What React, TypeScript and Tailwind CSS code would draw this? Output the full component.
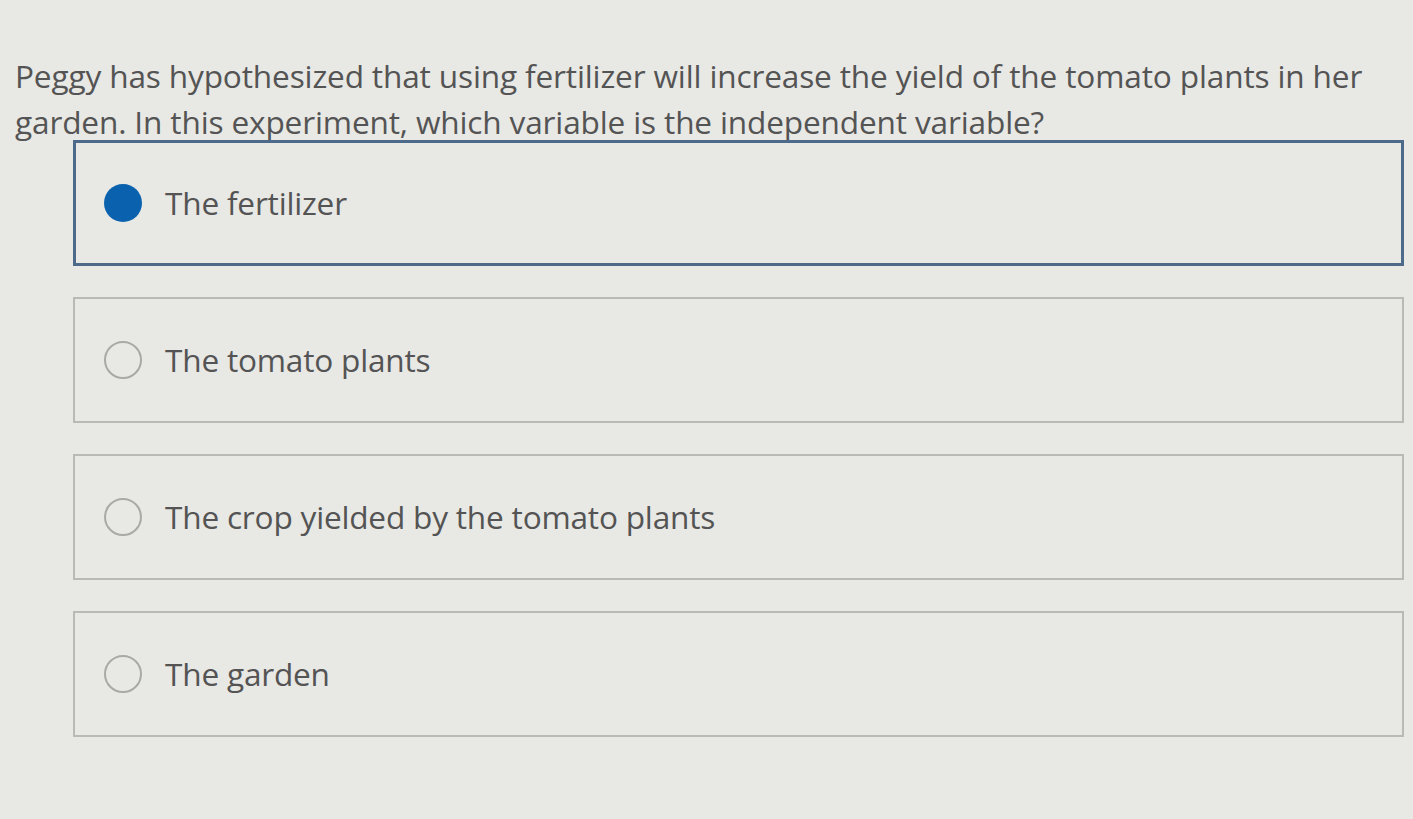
import React from "react";

const options = [
  { label: "The fertilizer", selected: true },
  { label: "The tomato plants", selected: false },
  { label: "The crop yielded by the tomato plants", selected: false },
  { label: "The garden", selected: false },
];

export default function App() {
  return (
    <div
      className="w-[1413px] h-[819px] bg-[#e8e8e5] overflow-hidden pl-[15px] pt-[53px] text-[#545454]"
      style={{ fontFamily: '"Open Sans", sans-serif' }}
    >
      <p className="text-[31.6px] leading-[46px] tracking-[-0.15px] whitespace-nowrap">
        Peggy has hypothesized that using fertilizer will increase the yield of the tomato plants in her
        <br />
        garden. In this experiment, which variable is the independent variable?
      </p>
      <div className="flex flex-col gap-[31px] ml-[58px] mr-[9px] mt-[-5px]">
        {options.map((o) => (
          <div
            key={o.label}
            className={
              o.selected
                ? "h-[126px] border-[3px] border-[#4e6a8b] flex items-center pl-[28px]"
                : "h-[126px] border-2 border-[#b9b9b6] flex items-center pl-[29px]"
            }
          >
            {o.selected ? (
              <span className="w-[38px] h-[38px] rounded-full bg-[#0a62ae] shrink-0" />
            ) : (
              <span className="w-[38px] h-[38px] rounded-full border-2 border-[#a9a9a6] shrink-0" />
            )}
            <span className="ml-[23px] text-[31.6px] leading-none tracking-[-0.2px]">{o.label}</span>
          </div>
        ))}
      </div>
    </div>
  );
}
